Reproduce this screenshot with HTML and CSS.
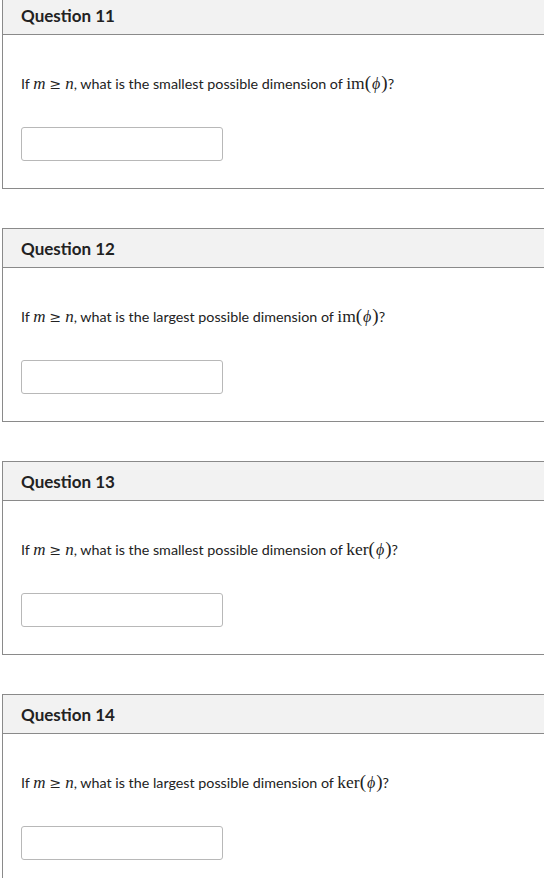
FILE: index.html
```html
<!DOCTYPE html>
<html>
<head>
<meta charset="utf-8">
<link rel="stylesheet" href="styles.css">
</head>
<body>
<div class="page">
  <div class="card">
    <div class="card-head">Question 11</div>
    <div class="card-body">
      <p class="q">If <span class="mi">m</span><span class="mo">≥</span><span class="mi">n</span>, what is the smallest possible dimension of <span class="mrm">im</span><span class="mp">(</span><span class="mi phi">ϕ</span><span class="mp">)</span>?</p>
      <input class="answer" type="text">
    </div>
  </div>
  <div class="card">
    <div class="card-head">Question 12</div>
    <div class="card-body">
      <p class="q">If <span class="mi">m</span><span class="mo">≥</span><span class="mi">n</span>, what is the largest possible dimension of <span class="mrm">im</span><span class="mp">(</span><span class="mi phi">ϕ</span><span class="mp">)</span>?</p>
      <input class="answer" type="text">
    </div>
  </div>
  <div class="card">
    <div class="card-head">Question 13</div>
    <div class="card-body">
      <p class="q">If <span class="mi">m</span><span class="mo">≥</span><span class="mi">n</span>, what is the smallest possible dimension of <span class="mrm">ker</span><span class="mp">(</span><span class="mi phi">ϕ</span><span class="mp">)</span>?</p>
      <input class="answer" type="text">
    </div>
  </div>
  <div class="card">
    <div class="card-head">Question 14</div>
    <div class="card-body">
      <p class="q">If <span class="mi">m</span><span class="mo">≥</span><span class="mi">n</span>, what is the largest possible dimension of <span class="mrm">ker</span><span class="mp">(</span><span class="mi phi">ϕ</span><span class="mp">)</span>?</p>
      <input class="answer" type="text">
    </div>
  </div>
</div>
</body>
</html>
```
FILE: styles.css
```css
html, body {
  margin: 0;
  padding: 0;
  background: #fff;
  overflow: hidden;
}
.page {
  margin-top: -5px;
  padding-left: 2px;
  font-family: Lato, "Liberation Sans", sans-serif;
  color: #2d3b45;
}
.card {
  width: 580px;
  border: 1px solid #8a8a8a;
  border-right: none;
  margin-bottom: 39px;
  box-sizing: border-box;
}
.card-head {
  height: 38px;
  background: #f2f2f2;
  border-bottom: 1px solid #8a8a8a;
  padding-left: 18px;
  font-size: 17px;
  font-weight: 700;
  line-height: 39px;
  color: #222;
}
.card-body {
  height: 153px;
  padding: 38px 0 0 18px;
  box-sizing: border-box;
}
.q {
  margin: 0;
  font-size: 14.3px;
  line-height: 20px;
  height: 20px;
  color: #222;
  white-space: nowrap;
}
.mi {
  font-family: "Liberation Serif", "DejaVu Serif", serif;
  font-style: italic;
  font-size: 17px;
}
.mo {
  font-family: "DejaVu Serif", serif;
  font-size: 14px;
  padding: 0 4px;
}
.mrm {
  font-family: "Liberation Serif", "DejaVu Serif", serif;
  font-size: 17.5px;
}
.mp {
  font-family: "Liberation Serif", "DejaVu Serif", serif;
  font-size: 19px;
}
.phi {
  font-size: 16px;
  padding: 0 1px;
}
.answer {
  display: block;
  margin-top: 34px;
  width: 202px;
  height: 34px;
  box-sizing: border-box;
  border: 1px solid #b8b8b8;
  border-radius: 3px;
  background: #fff;
  padding: 0;
}
```
